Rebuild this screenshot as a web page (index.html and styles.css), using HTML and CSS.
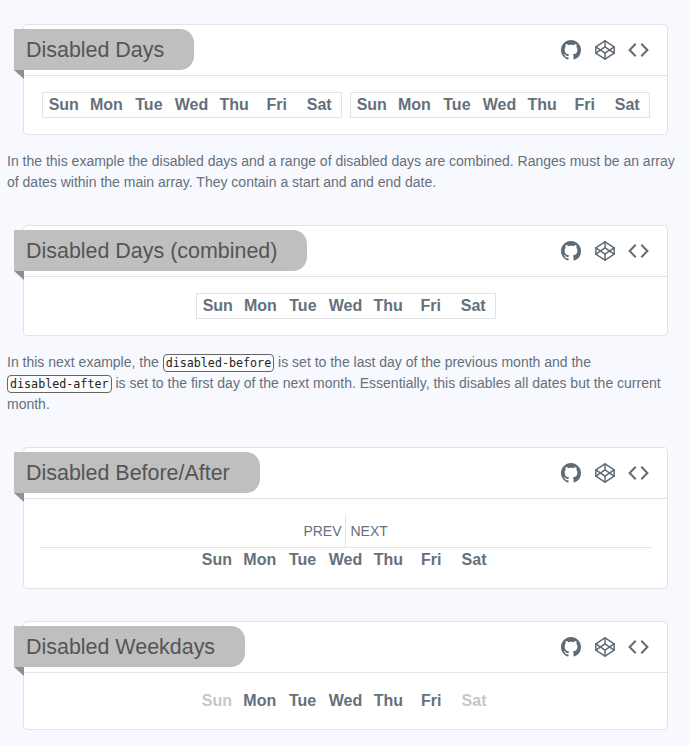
FILE: index.html
```html
<!DOCTYPE html>
<html lang="en">
<head>
<meta charset="utf-8">
<title>Disabled Days</title>
<link rel="stylesheet" href="styles.css">
</head>
<body>
<svg class="defs" width="0" height="0" aria-hidden="true">
  <symbol id="i-gh" viewBox="0 0 16 16"><path fill="currentColor" d="M8 0C3.58 0 0 3.58 0 8c0 3.54 2.29 6.53 5.47 7.59.4.07.55-.17.55-.38 0-.19-.01-.82-.01-1.49-2.01.37-2.53-.49-2.69-.94-.09-.23-.48-.94-.82-1.13-.28-.15-.68-.52-.01-.53.63-.01 1.08.58 1.23.82.72 1.21 1.87.87 2.33.66.07-.52.28-.87.51-1.07-1.78-.2-3.64-.89-3.64-3.95 0-.87.31-1.59.82-2.15-.08-.2-.36-1.02.08-2.12 0 0 .67-.21 2.2.82.64-.18 1.32-.27 2-.27.68 0 1.36.09 2 .27 1.53-1.04 2.2-.82 2.2-.82.44 1.1.16 1.92.08 2.12.51.56.82 1.27.82 2.15 0 3.07-1.87 3.75-3.65 3.95.29.25.54.73.54 1.48 0 1.07-.01 1.93-.01 2.2 0 .21.15.46.55.38A8.013 8.013 0 0016 8c0-4.42-3.58-8-8-8z"/></symbol>
  <symbol id="i-cp" viewBox="0 0 24 24"><g fill="none" stroke="currentColor" stroke-width="1.6" stroke-linejoin="round" stroke-linecap="round"><polygon points="12 2 22 8.5 22 15.5 12 22 2 15.5 2 8.5"/><line x1="12" y1="22" x2="12" y2="15.5"/><polyline points="22 8.5 12 15.5 2 8.5"/><polyline points="2 15.5 12 8.5 22 15.5"/><line x1="12" y1="2" x2="12" y2="8.5"/></g></symbol>
  <symbol id="i-code" viewBox="0 0 21 20"><g fill="none" stroke="currentColor" stroke-width="2" stroke-linecap="square" stroke-linejoin="miter"><polyline points="7 4.5 1.6 10 7 15.5"/><polyline points="14 4.5 19.4 10 14 15.5"/></g></symbol>
</svg>

<section class="card">
  <header class="card-head">
    <h2 class="ribbon">Disabled Days</h2>
    <div class="tools">
      <svg class="ico ico-gh"><use href="#i-gh"/></svg>
      <svg class="ico ico-cp"><use href="#i-cp"/></svg>
      <svg class="ico ico-code"><use href="#i-code"/></svg>
    </div>
  </header>
  <div class="card-body">
    <div class="cal-row">
      <div class="week boxed"><span>Sun</span><span>Mon</span><span>Tue</span><span>Wed</span><span>Thu</span><span>Fri</span><span>Sat</span></div>
      <div class="week boxed"><span>Sun</span><span>Mon</span><span>Tue</span><span>Wed</span><span>Thu</span><span>Fri</span><span>Sat</span></div>
    </div>
  </div>
</section>

<p class="note">In the this example the disabled days and a range of disabled days are combined. Ranges must be an array of dates within the main array. They contain a start and and end date.</p>

<section class="card">
  <header class="card-head">
    <h2 class="ribbon">Disabled Days (combined)</h2>
    <div class="tools">
      <svg class="ico ico-gh"><use href="#i-gh"/></svg>
      <svg class="ico ico-cp"><use href="#i-cp"/></svg>
      <svg class="ico ico-code"><use href="#i-code"/></svg>
    </div>
  </header>
  <div class="card-body">
    <div class="cal-row">
      <div class="week boxed"><span>Sun</span><span>Mon</span><span>Tue</span><span>Wed</span><span>Thu</span><span>Fri</span><span>Sat</span></div>
    </div>
  </div>
</section>

<p class="note">In this next example, the <code>disabled-before</code> is set to the last day of the previous month and the <code>disabled-after</code> is set to the first day of the next month. Essentially, this disables all dates but the current month.</p>

<section class="card third">
  <header class="card-head">
    <h2 class="ribbon">Disabled Before/After</h2>
    <div class="tools">
      <svg class="ico ico-gh"><use href="#i-gh"/></svg>
      <svg class="ico ico-cp"><use href="#i-cp"/></svg>
      <svg class="ico ico-code"><use href="#i-code"/></svg>
    </div>
  </header>
  <div class="card-body nav-body">
    <nav class="month-nav"><span class="prev">PREV</span><span class="next">NEXT</span></nav>
    <div class="cal-row">
      <div class="week plain"><span>Sun</span><span>Mon</span><span>Tue</span><span>Wed</span><span>Thu</span><span>Fri</span><span>Sat</span></div>
    </div>
  </div>
</section>

<section class="card fourth">
  <header class="card-head">
    <h2 class="ribbon">Disabled Weekdays</h2>
    <div class="tools">
      <svg class="ico ico-gh"><use href="#i-gh"/></svg>
      <svg class="ico ico-cp"><use href="#i-cp"/></svg>
      <svg class="ico ico-code"><use href="#i-code"/></svg>
    </div>
  </header>
  <div class="card-body">
    <div class="cal-row">
      <div class="week plain"><span class="off">Sun</span><span>Mon</span><span>Tue</span><span>Wed</span><span>Thu</span><span>Fri</span><span class="off">Sat</span></div>
    </div>
  </div>
</section>
</body>
</html>
```

FILE: styles.css
```css
html, body { margin: 0; padding: 0; }
body {
  background: #f8f9fe;
  color: #65707b;
  font-family: "Liberation Sans", Arial, sans-serif;
  font-size: 14px;
  line-height: 21px;
  padding: 24px 15px 0 7px;
  height: 722px;
  overflow: hidden;
}
.defs { position: absolute; }
.card {
  box-sizing: border-box;
  margin-left: 16px;
  width: 645px;
  background: #fff;
  border: 1px solid #e2e3e6;
  border-radius: 4px;
}
.card-head {
  box-sizing: border-box;
  height: 51px;
  border-bottom: 1px solid #e2e3e6;
  display: flex;
  align-items: flex-start;
  justify-content: space-between;
}
.ribbon {
  position: relative;
  margin: 4px 0 0 -10px;
  height: 40px;
  padding: 1px 30px 0 12px;
  background: #bfbfbf;
  border-radius: 0 14px 14px 0;
  color: #555;
  font-size: 21.45px;
  font-weight: 400;
  line-height: 41px;
  white-space: nowrap;
}
.ribbon::after {
  content: "";
  position: absolute;
  left: 0;
  top: 41px;
  border-top: 9px solid #8f8f8f;
  border-left: 10px solid transparent;
}
.tools {
  display: flex;
  align-items: center;
  height: 50px;
  padding-right: 18px;
  color: #5e6a75;
}
.ico { display: block; }
.ico-gh { width: 20px; height: 20px; margin-right: 13px; }
.ico-cp { width: 22px; height: 22px; margin-right: 12px; }
.ico-code { width: 21px; height: 20px; }
.card-body { padding: 16px 17px 16px 18px; }
.cal-row { display: flex; justify-content: center; gap: 8px; }
.week {
  box-sizing: border-box;
  width: 300px;
  display: grid;
  grid-template-columns: repeat(7, 1fr);
  font-size: 16px;
  font-weight: 700;
  line-height: 24px;
  text-align: center;
}
.boxed { border: 1px solid #e2e3e6; text-indent: -1px; }
.off { color: #c4c8cc; }
.nav-body { padding: 16px; }
.month-nav {
  display: flex;
  justify-content: center;
  height: 32px;
  border-bottom: 1px solid #e2e3e6;
}
.month-nav span { line-height: 32px; }
.prev { width: 150px; padding-right: 3px; text-align: right; box-sizing: border-box; border-right: 1px solid #e2e3e6; }
.next { width: 150px; padding-left: 5px; box-sizing: border-box; }
.note { margin: 16px 0 32px; }
.fourth { margin-top: 32px; }
.fourth .card-body { padding: 16px; }
code {
  font-family: "DejaVu Sans Mono", monospace;
  font-size: 11.7px;
  line-height: 1;
  color: #222;
  background: #fdfdfd;
  border: 1px solid #666;
  border-radius: 4px;
  padding: 1px 2px;
  white-space: nowrap;
}
```
